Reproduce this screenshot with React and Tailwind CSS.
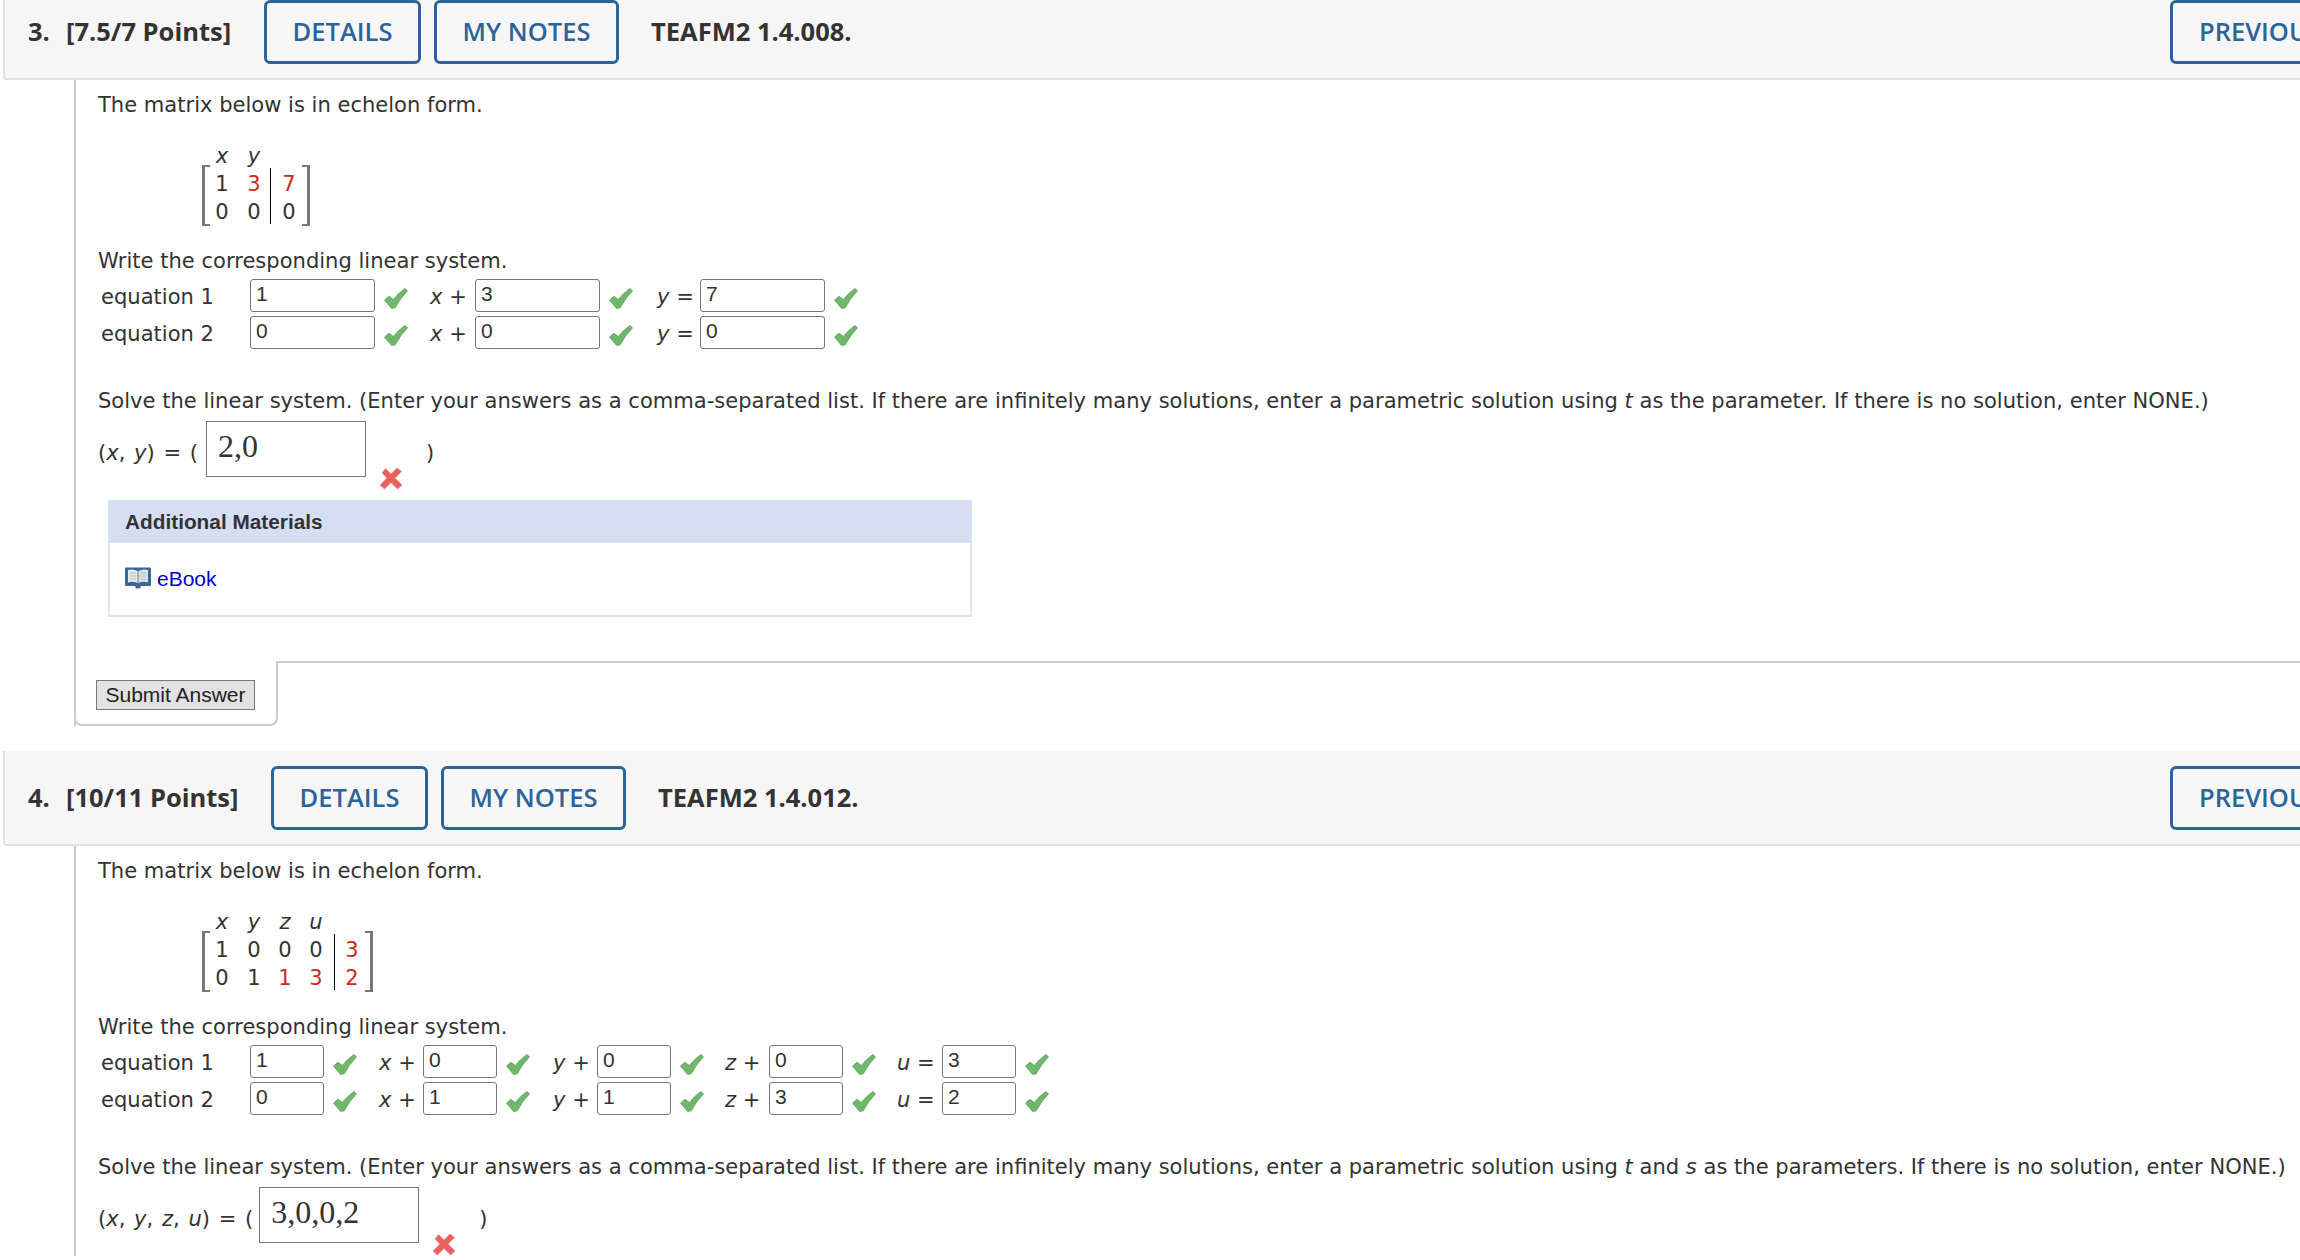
import React from "react";

const Check = () => (
  <svg width="24" height="21" viewBox="0 0 24 21" className="shrink-0">
    <path d="M0.5 12 L5 8.3 L9.3 11.5 Q14 5.5 20.8 0.5 L23.5 2.8 Q16.5 10 11.2 19.8 L7.6 20.5 Z" fill="#6fb86b" stroke="#5c9f59" strokeWidth="0.8" strokeLinejoin="round" />
  </svg>
);

const Cross = () => (
  <svg width="24" height="23" viewBox="0 0 24 23" className="shrink-0">
    <path d="M3 6 L6.5 1.5 L12 7 L18 1 L22.5 4.5 L16 11 L23 18 L18.5 22 L12 15.5 L5.5 22 L1 18 L8 11 Z" fill="#e8615e" stroke="#ee8a87" strokeWidth="0.8" strokeLinejoin="round" />
  </svg>
);

const Book = () => (
  <svg width="26" height="22" viewBox="0 0 26 22" className="shrink-0">
    <path d="M0 1.5 Q0 0.5 1 0.5 L25 0.5 Q26 0.5 26 1.5 L26 18 Q26 19 25 19 L16 19 L15 21.5 L11 21.5 L10 19 L1 19 Q0 19 0 18 Z" fill="#3a6796" />
    <path d="M3 3 Q8 1.5 12.6 4 L12.6 16 Q8 14 3 15.5 Z" fill="#e6e8ea" />
    <path d="M23 3 Q18 1.5 13.4 4 L13.4 16 Q18 14 23 15.5 Z" fill="#dde0e3" />
    <path d="M5 6 H11 M5 9 H11 M5 12 H11 M15 6 H21 M15 9 H21 M15 12 H21" stroke="#bcc0c4" strokeWidth="1" />
  </svg>
);

const HeaderButton = ({ label, w }) => (
  <div className={`${w} h-[64px] shrink-0 rounded-[6px] border-[3px] border-[#2c6499] text-[#2c6499] font-semibold flex items-center justify-center`}>
    {label}
  </div>
);

const Header = ({ num, points, code, detailsMargin }) => (
  <div className="ml-[3px] h-[95px] border-2 border-r-0 border-t-0 border-[#e2e2e2] rounded-bl-[3px] bg-[#f6f6f6] flex items-center pl-[23px] overflow-hidden font-['Open_Sans',sans-serif] text-[25.5px] text-[#333333] whitespace-nowrap">
    <span className="font-bold w-[38px] shrink-0">{num}</span>
    <span className={`font-bold shrink-0 ${detailsMargin}`}>{points}</span>
    <HeaderButton label="DETAILS" w="w-[157px]" />
    <div className="w-[13px] shrink-0" />
    <HeaderButton label="MY NOTES" w="w-[185px]" />
    <span className="font-bold ml-[32px] shrink-0">{code}</span>
    <div className="flex-1" />
    <div className="w-[130px] shrink-0">
      <div className="w-[320px] h-[64px] rounded-[6px] border-[3px] border-[#2c6499] text-[#2c6499] font-semibold flex items-center pl-[26px]">
        PREVIOUS ANSWERS
      </div>
    </div>
  </div>
);

const Var = ({ children }) => <i>{children}</i>;

const Matrix = ({ vars, rows, cols, divider, width }) => (
  <div className={`ml-[104px] mt-[26px] relative ${width}`}>
    <div className="h-[22px] relative">
      {vars.map((v, i) => (
        <i key={v} className={`absolute -top-[1px] leading-[22px] w-[30px] -ml-[15px] text-center ${cols[i]}`}>{v}</i>
      ))}
    </div>
    <div className="relative h-[61px] -mt-[3px] border-x-[3px] border-[#777777]">
      <div className="absolute -left-[3px] top-0 w-[8px] h-[2px] bg-[#777777]" />
      <div className="absolute -left-[3px] bottom-0 w-[8px] h-[2px] bg-[#777777]" />
      <div className="absolute -right-[3px] top-0 w-[8px] h-[2px] bg-[#777777]" />
      <div className="absolute -right-[3px] bottom-0 w-[8px] h-[2px] bg-[#777777]" />
      <div className={`absolute top-[3px] bottom-[2px] w-[1px] bg-black ${divider}`} />
      {rows.map((row, r) =>
        row.map((cell, c) => (
          <span
            key={`${r}-${c}`}
            className={`absolute leading-[29px] w-[30px] -ml-[18px] text-center ${r === 0 ? "top-[4px]" : "top-[32px]"} ${cols[c]} ${cell.red ? "text-[#cc2a20]" : ""}`}
          >
            {cell.v}
          </span>
        ))
      )}
    </div>
  </div>
);

const Cell = ({ value, w }) => (
  <>
    <input
      readOnly
      defaultValue={value}
      className={`${w} h-[33px] shrink-0 border border-[#777777] rounded-[3px] px-[5px] bg-white text-[21px] text-[#333333] outline-none font-['Liberation_Sans',sans-serif] leading-none pb-[3px]`}
    />
    <div className="ml-[9px] mt-[6px] shrink-0 flex"><Check /></div>
  </>
);

const EqRow = ({ label, terms, w }) => (
  <div className="flex items-center h-[33px]">
    <span className="w-[152px] shrink-0 pl-[3px] pt-[2px]">{label}</span>
    {terms.map((t, i) => (
      <React.Fragment key={i}>
        {t.pre && <span className={`shrink-0 whitespace-pre pt-[2px] ${t.preClass}`}>{t.pre}</span>}
        <Cell value={t.value} w={w} />
      </React.Fragment>
    ))}
  </div>
);

const Answer = ({ label, value, inputMl }) => (
  <div className="mt-[5px] flex items-start">
    <span className="mt-[17px] leading-[30px] whitespace-pre shrink-0 [word-spacing:2px]">{label}</span>
    <input
      readOnly
      defaultValue={value}
      className={`${inputMl} w-[160px] h-[56px] shrink-0 border border-[#777777] bg-white px-[11px] pb-[6px] text-[32px] text-[#333333] outline-none font-['Liberation_Serif',serif]`}
    />
    <div className="ml-[13px] mt-[46px] shrink-0 flex"><Cross /></div>
    <span className="ml-[23px] mt-[17px] leading-[30px] shrink-0">)</span>
  </div>
);

const Additional = () => (
  <div className="mt-[10px] ml-[10px] w-[864px] h-[117px] border-2 border-t-0 border-[#dfe4f5] font-['Liberation_Sans',sans-serif]">
    <div className="-mx-[2px] h-[43px] bg-[#d6def3] flex items-center pl-[17px] text-[20.8px] font-bold text-[#333333]">
      Additional Materials
    </div>
    <div className="pl-[15px] pt-[22px] flex items-center text-[21px] text-[#0000cc] leading-[24px]">
      <Book />
      <span className="ml-[6px] pt-[2px]">eBook</span>
    </div>
  </div>
);

const Submit = () => (
  <div className="flex -ml-[24px] mt-[44px]">
    <div className="w-[204px] h-[65px] shrink-0 border-2 border-t-0 border-[#cccccc] rounded-b-[8px] pl-[20px] pt-[19px]">
      <div className="w-[159px] h-[30px] border border-[#777777] bg-[#e2e2e2] text-[#222222] text-[21px] flex items-center justify-center font-['Liberation_Sans',sans-serif]">
        Submit Answer
      </div>
    </div>
    <div className="flex-1 border-t-2 border-[#cccccc]" />
  </div>
);

const Section = ({ header, matrix, eqs, eqW, solve, answer, showRest }) => (
  <div>
    <Header {...header} />
    <div className="ml-[74px] border-l-2 border-[#cccccc] pl-[22px] text-[21.05px] text-[#333333] font-['DejaVu_Sans',sans-serif]">
      <p className="pt-[10px] leading-[30px]">The matrix below is in echelon form.</p>
      <Matrix {...matrix} />
      <p className="mt-[20px] leading-[30px]">Write the corresponding linear system.</p>
      <div className="mt-[3px] flex flex-col gap-[4px]">
        {eqs.map((e) => (
          <EqRow key={e.label} label={e.label} terms={e.terms} w={eqW} />
        ))}
      </div>
      <p className="mt-[37px] leading-[30px] whitespace-nowrap">{solve}</p>
      <Answer {...answer} />
      {showRest && <Additional />}
      {showRest && <Submit />}
    </div>
  </div>
);

const n = (v) => ({ v });
const r = (v) => ({ v, red: true });

const t3 = (a, b, c) => [
  { value: a },
  { pre: <span><Var>x</Var> +</span>, preClass: "w-[45px] ml-[22px]", value: b },
  { pre: <span><Var>y</Var> =</span>, preClass: "w-[43px] ml-[24px]", value: c },
];

const t5 = (a, b, c, d, e) => [
  { value: a },
  { pre: <span><Var>x</Var> +</span>, preClass: "w-[44px] ml-[22px]", value: b },
  { pre: <span><Var>y</Var> +</span>, preClass: "w-[44px] ml-[23px]", value: c },
  { pre: <span><Var>z</Var> +</span>, preClass: "w-[44px] ml-[21px]", value: d },
  { pre: <span><Var>u</Var> =</span>, preClass: "w-[45px] ml-[21px]", value: e },
];

export default function App() {
  return (
    <div className="w-[2300px] h-[1260px] overflow-hidden bg-white">
      <div className="-mt-[15px]">
        <Section
          header={{ num: "3.", points: "[7.5/7 Points]", code: "TEAFM2 1.4.008.", detailsMargin: "w-[198px]" }}
          matrix={{
            vars: ["x", "y"],
            cols: ["left-[20px]", "left-[52px]", "left-[87px]"],
            divider: "left-[65px]",
            width: "w-[108px]",
            rows: [
              [n("1"), r("3"), r("7")],
              [n("0"), n("0"), n("0")],
            ],
          }}
          eqW="w-[125px]"
          eqs={[
            { label: "equation 1", terms: t3("1", "3", "7") },
            { label: "equation 2", terms: t3("0", "0", "0") },
          ]}
          solve={<>Solve the linear system. (Enter your answers as a comma-separated list. If there are infinitely many solutions, enter a parametric solution using <Var>t</Var> as the parameter. If there is no solution, enter NONE.)</>}
          answer={{ label: <>(<Var>x</Var>, <Var>y</Var>) = (</>, value: "2,0", inputMl: "ml-[8px]" }}
          showRest
        />
        <div className="h-[25px]" />
        <Section
          header={{ num: "4.", points: "[10/11 Points]", code: "TEAFM2 1.4.012.", detailsMargin: "w-[205px]" }}
          matrix={{
            vars: ["x", "y", "z", "u"],
            cols: ["left-[20px]", "left-[52px]", "left-[83px]", "left-[114px]", "left-[150px]"],
            divider: "left-[129px]",
            width: "w-[171px]",
            rows: [
              [n("1"), n("0"), n("0"), n("0"), r("3")],
              [n("0"), n("1"), r("1"), r("3"), r("2")],
            ],
          }}
          eqW="w-[74px]"
          eqs={[
            { label: "equation 1", terms: t5("1", "0", "0", "0", "3") },
            { label: "equation 2", terms: t5("0", "1", "1", "3", "2") },
          ]}
          solve={<>Solve the linear system. (Enter your answers as a comma-separated list. If there are infinitely many solutions, enter a parametric solution using <Var>t</Var> and <Var>s</Var> as the parameters. If there is no solution, enter NONE.)</>}
          answer={{ label: <>(<Var>x</Var>, <Var>y</Var>, <Var>z</Var>, <Var>u</Var>) = (</>, value: "3,0,0,2", inputMl: "ml-[6px]" }}
        />
      </div>
    </div>
  );
}
